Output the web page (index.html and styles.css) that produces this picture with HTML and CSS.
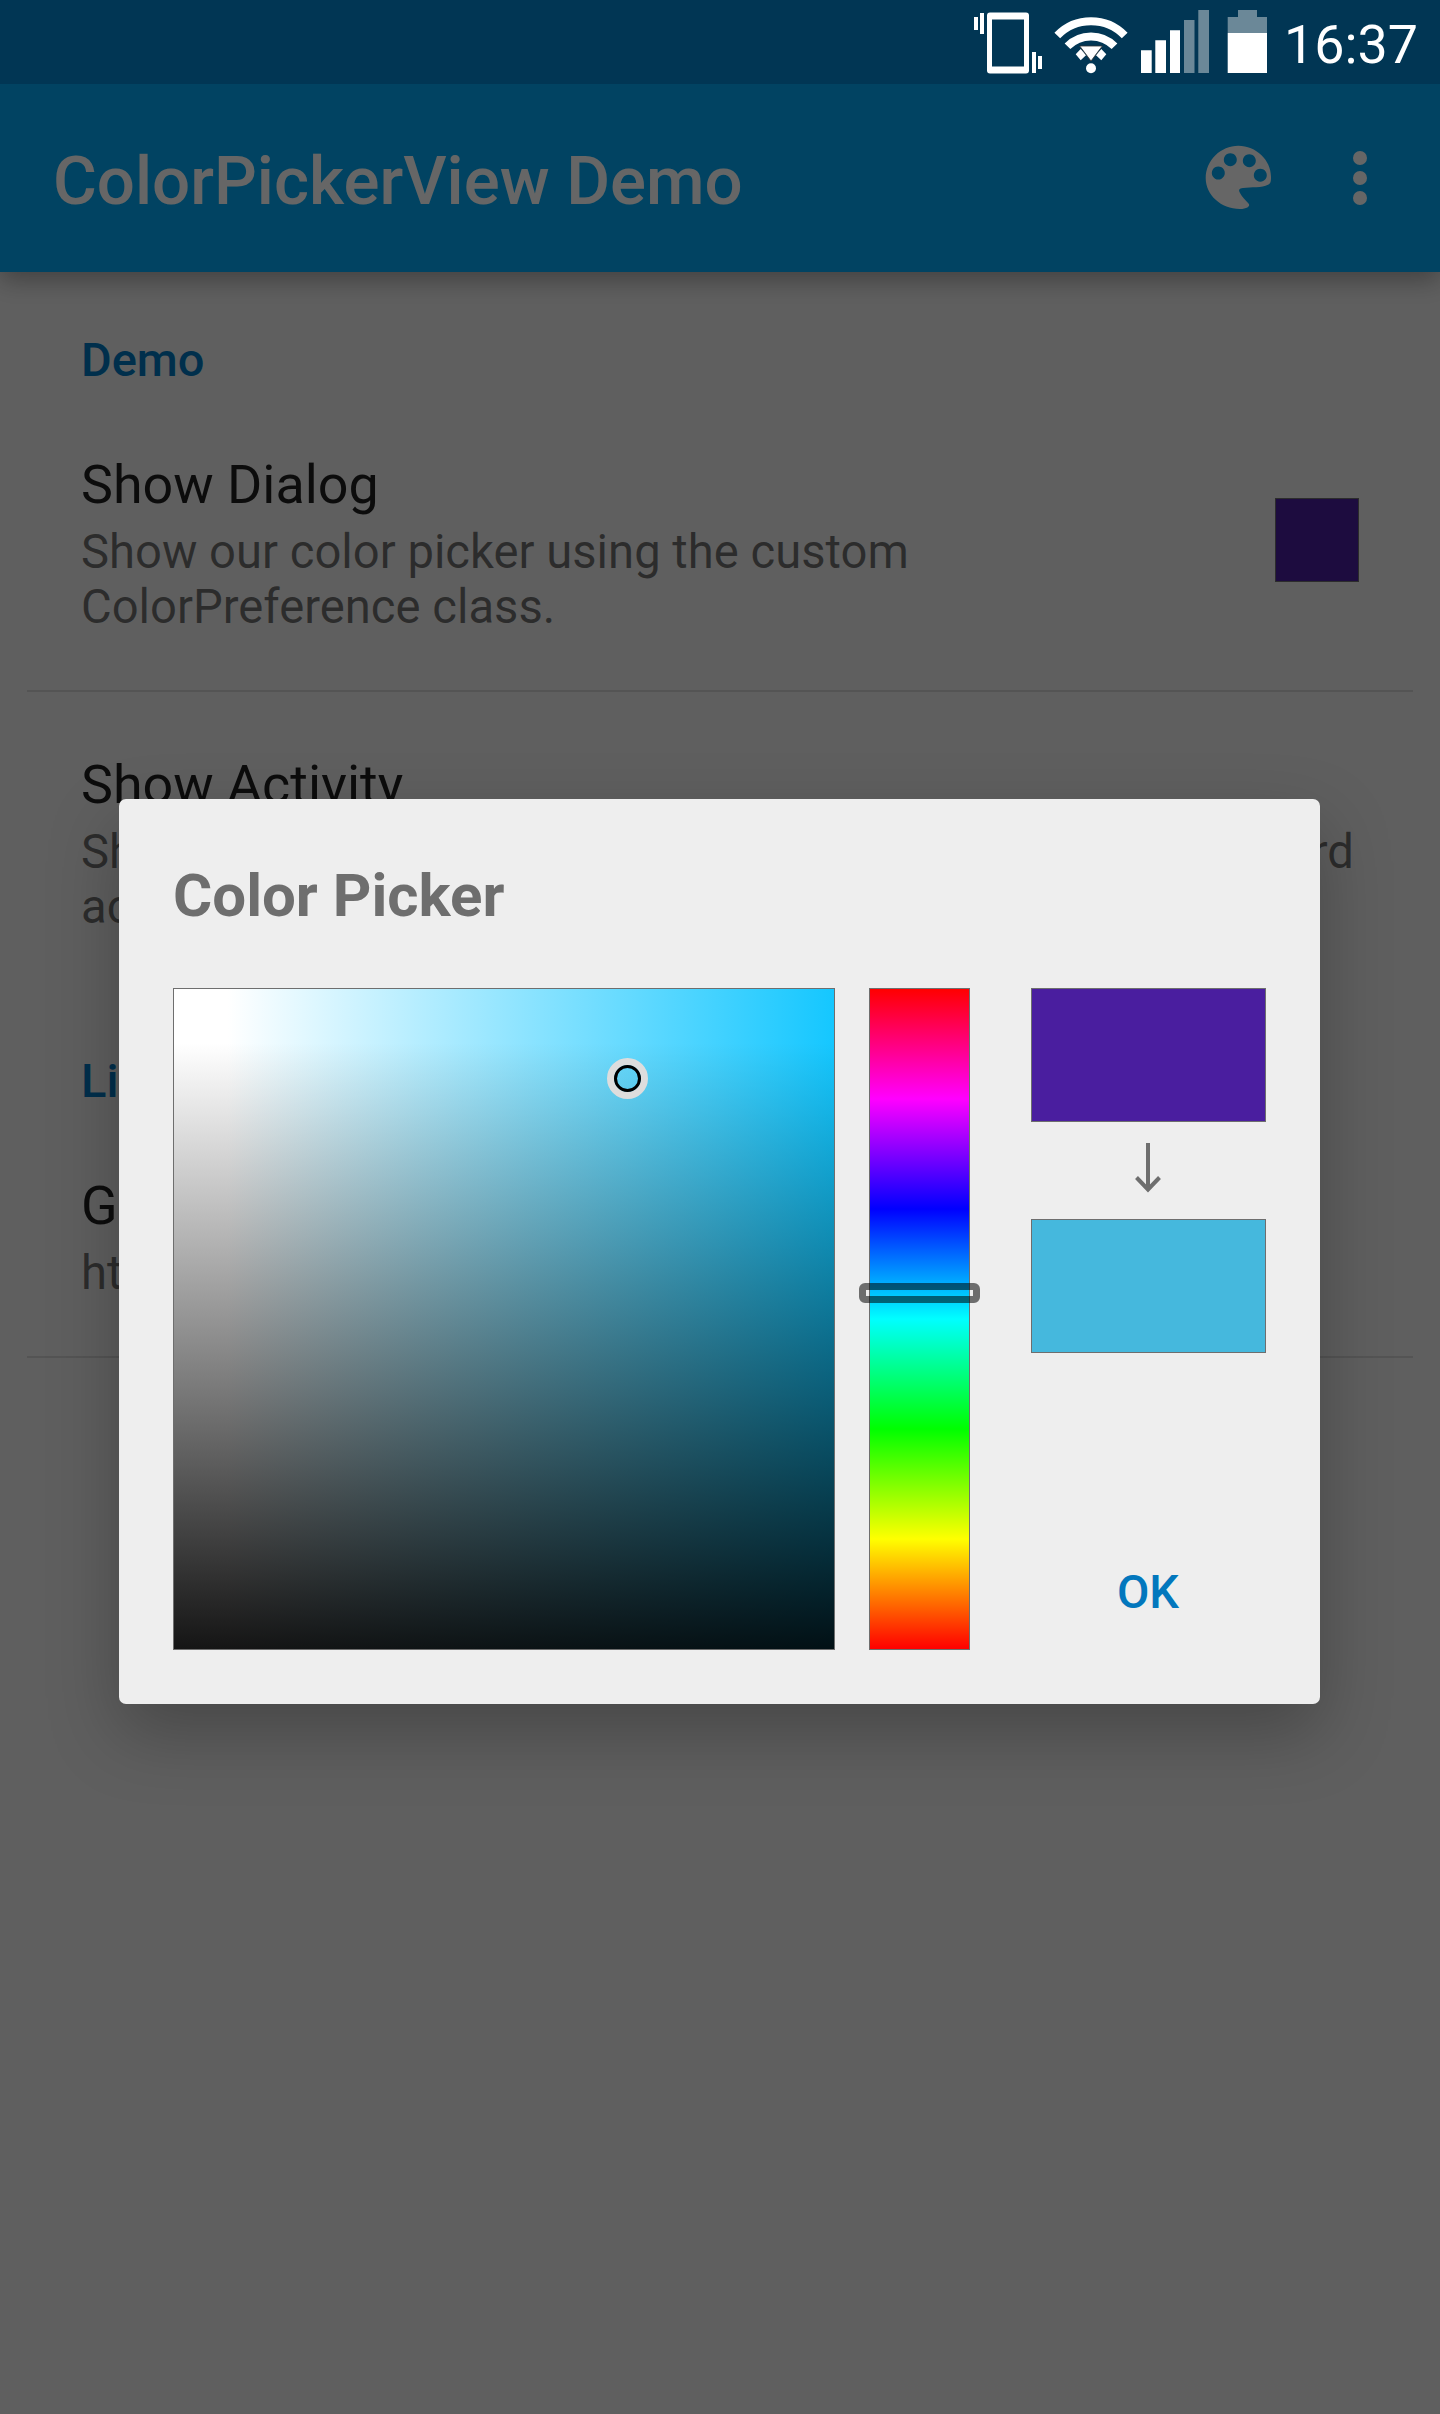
FILE: index.html
```html
<!DOCTYPE html>
<html lang="en">
<head>
  <meta charset="UTF-8">
  <meta name="viewport" content="width=device-width, initial-scale=1.0">
  <title>ColorPickerView Demo</title>
  <link rel="stylesheet" href="styles.css">
</head>
<body>
  <header class="status-bar">
    <svg width="72" height="84" viewBox="0 0 72 84" fill="#fff">
      <path d="M2 17h4v13H2zM8 13h4v21H8zM60 52h4v21h-4zM66 56h4v13h-4z"/>
      <path fill-rule="evenodd" d="M18 12.5h36q3 0 3 3v55q0 3-3 3H18q-3 0-3-3v-55q0-3 3-3zM20 19.5v47h32v-47z"/>
    </svg>
    <svg class="wifi" width="76" height="84" viewBox="0 0 76 84">
      <g fill="none" stroke="#fff" stroke-width="8">
        <path d="M4.3 35.5A47 47 0 0 1 71.7 35.5"/>
        <path d="M14.5 46.3A33 33 0 0 1 61.5 46.3"/>
      </g>
      <path fill="#fff" d="M22.7 54.3L27.7 49l5.3 6.3-5.3 5zM53.3 54.3L48.3 49 43 55.3l5.3 5z"/>
      <path fill="#fff" stroke="#333" stroke-width=".8" d="M26.7 46h22.6L38 61z"/>
      <circle cx="38" cy="68.3" r="5" fill="#fff"/>
    </svg>
    <svg class="signal" width="70" height="84" viewBox="0 0 70 84" fill="#fff">
      <path d="M1 50.3h10.7V73H1zM15.3 40.3H26V73H15.3zM30 30.3h10V73H30z"/>
      <path fill="#6b8898" d="M44 20h10.5v53H44zM58.3 10H69v63H58.3z"/>
    </svg>
    <svg class="battery" width="44" height="84" viewBox="0 0 44 84">
      <path fill="#6b8898" d="M12 10h19v7h10v16H1.7V17H12z"/>
      <path fill="#fff" d="M1.7 33H41v40H1.7z"/>
    </svg>
    <span class="clock">16:37</span>
  </header>

  <nav class="app-bar">
    <h1>ColorPickerView Demo</h1>
    <svg width="68" height="68" viewBox="0 0 68 68" fill="#fff">
      <path fill-rule="evenodd" d="M34.3 1.7C52 1.7 67 16 67 32.7C67 37 67 39 64 40.8C58 44 47 43 39 44.1C35 44.7 34.3 46 36 49C38 53 41 55.5 44.5 59.5C47 62.5 42 65 36 65C17 65 1.7 51 1.7 34.3C1.7 16 17 1.7 34.3 1.7zM14.3 22.5a6.5 6.5 0 1 0 .01 0zM26.3 9.2a6.5 6.5 0 1 0 .01 0zM45.3 10.2a6.5 6.5 0 1 0 .01 0zM56.3 24.7a6.5 6.5 0 1 0 .01 0z"/>
    </svg>
    <svg class="overflow" width="14" height="56" viewBox="0 0 14 56" fill="#fff">
      <circle cx="7" cy="8" r="7"/><circle cx="7" cy="28" r="7"/><circle cx="7" cy="48" r="7"/>
    </svg>
  </nav>

  <main class="settings">
    <h2>Demo</h2>
    <section class="pref divided">
      <div class="pref-text">
        <h3>Show Dialog</h3>
        <p>Show our color picker using the custom ColorPreference class.</p>
      </div>
      <div class="pref-swatch"></div>
    </section>
    <section class="pref">
      <div class="pref-text wide">
        <h3>Show Activity</h3>
        <p>Show our color picker view being used inside a standard activity.</p>
      </div>
    </section>
    <h2>Links</h2>
    <section class="pref divided">
      <div class="pref-text">
        <h3>GitHub</h3>
        <p>https://github.com</p>
      </div>
    </section>
  </main>

  <div class="scrim">
    <div class="dialog">
      <h2>Color Picker</h2>
      <div class="picker">
        <div class="satval"><div class="satval-cursor"></div></div>
        <div class="hue"><div class="hue-cursor"></div></div>
        <div class="result">
          <div class="color old"></div>
          <svg width="28" height="52" viewBox="0 0 28 52" fill="none" stroke="#6e6e6e" stroke-width="4">
            <path d="M14 1v46M2.5 35.5L14 47.5l11.5-12"/>
          </svg>
          <div class="color new"></div>
          <button>OK</button>
        </div>
      </div>
    </div>
  </div>
</body>
</html>
```
FILE: styles.css
```css
*,*::after{box-sizing:border-box;margin:0;padding:0;font-family:Roboto,sans-serif}
body{background:#eee;height:2414px;overflow:hidden;position:relative}
svg{display:block;flex:none}

/* status bar stays above the scrim */
.status-bar{height:84px;background:#013654;color:#fff;display:flex;align-items:center;padding-left:972px;position:relative;z-index:3}
.wifi{margin-left:9px}
.signal{margin-left:11px}
.battery{margin-left:16px}
.clock{font-size:53.8px;line-height:66px;margin-left:14px;margin-top:5px}

.app-bar{height:188px;background:#03a9f4;color:#fff;display:flex;align-items:center;padding:0 73px 0 53px;position:relative;box-shadow:0 8px 24px rgba(0,0,0,.32)}
.app-bar h1{font-size:67.2px;font-weight:500;line-height:82px;flex:1;margin-top:6px}
.overflow{margin-left:81px}

.settings{padding-top:59px}
.settings h2{font-size:47px;font-weight:500;line-height:57px;color:#0277bd;padding-left:81px;margin-bottom:2px}
.pref{height:300px;padding:62px 81px 0;display:flex;align-items:flex-start;position:relative}
.pref + h2{margin-top:62px}
.pref-text{width:860px}
.pref-text.wide{width:1273px;flex:none}
.wide p{text-align:justify}
.pref h3{font-size:53.8px;font-weight:400;line-height:66px;color:rgba(0,0,0,.87);margin-bottom:7px}
.pref p{font-size:47.2px;line-height:55px;color:rgba(0,0,0,.54)}
.pref-swatch{width:84px;height:84px;margin:46px 0 0 auto;background:#4a1e9f;border:1px solid #6e6e6e}
.divided::after{content:"";position:absolute;left:27px;right:27px;top:100%;height:2px;background:rgba(0,0,0,.12)}
.pref:last-child{height:245px}

.scrim{position:absolute;top:0;left:0;width:100%;height:2414px;background:rgba(0,0,0,.6);padding:799px 120px 0 119px;z-index:2}
.dialog{height:905px;background:#eee;border-radius:7px;padding:62px 54px 54px;box-shadow:0 28px 70px rgba(0,0,0,.26)}
.dialog h2{font-size:60px;font-weight:700;line-height:70px;color:#6e6e6e;margin-bottom:57px}
.picker{display:flex;height:662px}
.satval,.hue,.color{border:1px solid #6e6e6e}
.satval{width:662px;position:relative;background-image:linear-gradient(to bottom,#fff 54px,#000 calc(100% + 54px)),linear-gradient(to right,#fff 54px,#00c2ff calc(100% + 54px));background-blend-mode:multiply}
.satval-cursor{position:absolute;left:433px;top:69px;width:41px;height:41px;border-radius:50%;border:7px solid #ddd}
.satval-cursor::after{content:"";display:block;width:27px;height:27px;border:3px solid #000;border-radius:50%}
.hue{width:101px;margin-left:34px;position:relative;background:linear-gradient(to bottom,#f00,#f0f,#00f,#0ff,#0f0,#ff0,#f00)}
.hue-cursor{position:absolute;left:-11px;top:294px;width:121px;height:20px;border:7px solid rgba(0,0,0,.54);border-radius:6px}
.result{width:235px;margin-left:61px;display:flex;flex-direction:column;align-items:center}
.color{width:235px;height:134px}
.old{background:#4a1e9f}
.new{background:#45b8dd}
.result svg{margin:20px 1px 25px 0}
.result button{margin:auto 1px 30px 0;height:57px;border:none;background:none;color:#0277bd;font-size:47px;font-weight:500;line-height:57px}
```
